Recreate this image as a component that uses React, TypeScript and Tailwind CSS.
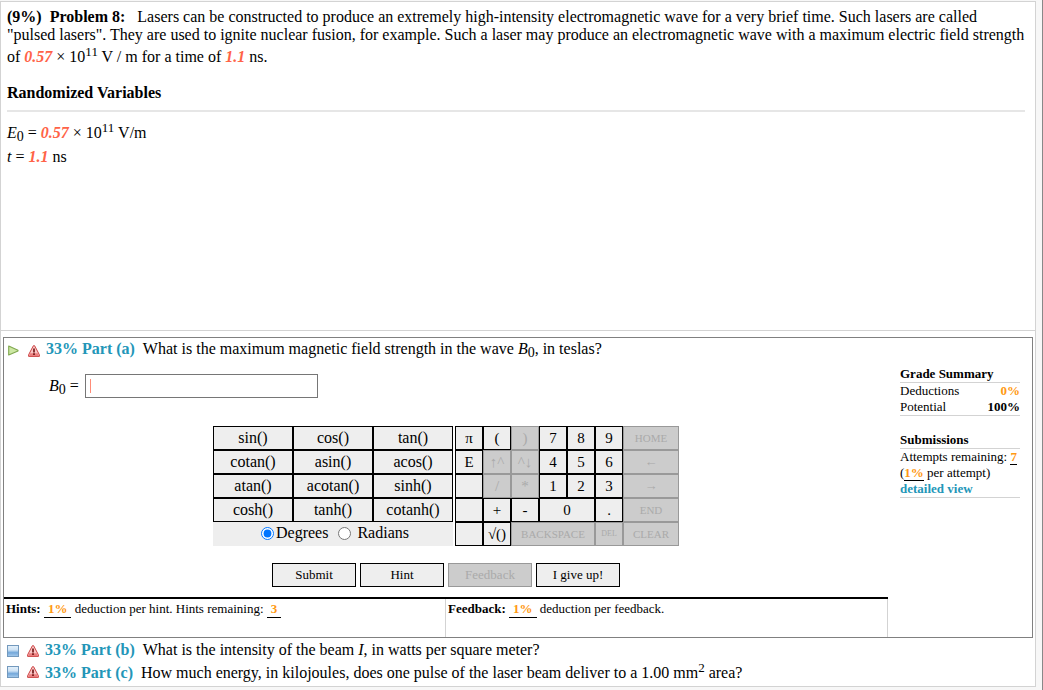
import type { ReactNode } from "react";

function Sup({ children }: { children: ReactNode }) {
  return <sup className="static! align-super! text-[13px]! leading-4!">{children}</sup>;
}

function Sub({ children }: { children: ReactNode }) {
  return <sub className="static! align-[-3px]! text-sm! leading-3!">{children}</sub>;
}

function Value({ children }: { children: ReactNode }) {
  return <b className="italic text-[#ff6347]">{children}</b>;
}

function Warning() {
  return (
    <svg viewBox="0 0 12 12" className="h-3 w-3 shrink-0" aria-hidden="true">
      <path d="M5.4 .7h1.2L11.4 9.8v1.6H.6V9.8Z" fill="#f9c4c4" stroke="#cc4444" strokeWidth="1" strokeLinejoin="round" />
      <path d="M2.2 8.2h7.6l1 1.7v1H1.2v-1Z" fill="#ea7e7e" />
      <path d="M5.2 3.6h1.6v4H5.2zM5.2 8.3h1.6V10H5.2z" fill="#6a1010" />
    </svg>
  );
}

function Play() {
  return (
    <svg viewBox="0 0 11 11" className="h-[11px] w-[11px] shrink-0" aria-hidden="true">
      <path d="M.7 1 10 5.2v.9L.7 10Z" fill="#cde8a4" stroke="#80a850" strokeWidth="1.1" strokeLinejoin="round" />
    </svg>
  );
}

function Stop() {
  return (
    <svg viewBox="0 0 12 12" className="h-3 w-3 shrink-0" aria-hidden="true">
      <defs>
        <linearGradient id="stop-fill" x1="0" y1="0" x2="0" y2="1">
          <stop offset="0" stopColor="#e4f1fb" />
          <stop offset="0.4" stopColor="#cfe3f5" />
          <stop offset="0.65" stopColor="#74a8da" />
          <stop offset="1" stopColor="#a9cdee" />
        </linearGradient>
      </defs>
      <rect x=".5" y=".5" width="11" height="11" fill="url(#stop-fill)" stroke="#7399bd" />
    </svg>
  );
}

function PartHeading({ icon, label, children }: { icon: ReactNode; label: string; children: ReactNode }) {
  return (
    <div className="flex items-center">
      <span className="flex w-5 shrink-0 items-center pt-0.5">{icon}</span>
      <span className="flex shrink-0 items-center pt-0.5 pr-1.5">
        <Warning />
      </span>
      <h2>
        <b className="mr-2 text-[#2396b8]">{label}</b>
        {children}
      </h2>
    </div>
  );
}

const functions = [
  "sin()", "cos()", "tan()",
  "cotan()", "asin()", "acos()",
  "atan()", "acotan()", "sinh()",
  "cosh()", "tanh()", "cotanh()",
];

type Key = { text: string; label?: string; span?: number; off?: boolean; size?: string };

const small = "text-[11px]";

const keys: Key[] = [
  { text: "π" }, { text: "(" }, { text: ")", off: true }, { text: "7" }, { text: "8" }, { text: "9" },
  { text: "HOME", span: 2, off: true, size: small },
  { text: "E" }, { text: "↑^", off: true }, { text: "^↓", off: true }, { text: "4" }, { text: "5" }, { text: "6" },
  { text: "←", span: 2, off: true, size: "text-[13px]" },
  { text: "", label: "Unused key" }, { text: "/", off: true }, { text: "*", off: true }, { text: "1" }, { text: "2" }, { text: "3" },
  { text: "→", span: 2, off: true, size: "text-[13px]" },
  { text: "", label: "Unused key" }, { text: "+" }, { text: "-" }, { text: "0", span: 2 }, { text: "." },
  { text: "END", span: 2, off: true, size: small },
  { text: "", label: "Unused key" }, { text: "√()" }, { text: "BACKSPACE", span: 3, off: true, size: small },
  { text: "DEL", off: true, size: "text-[8px]" }, { text: "CLEAR", span: 2, off: true, size: small },
];

const keyOn = "border-black bg-[#eee] text-black";
const keyOff = "border-[#999] bg-[#ccc] text-[#aaa]";
const spans = ["", "col-span-1", "col-span-2", "col-span-3"];

function Keypad() {
  return (
    <div className="flex justify-center gap-0.5">
      <div className="bg-[#eee]">
        <div className="grid grid-cols-[repeat(3,80px)]">
          {functions.map((name) => (
            <button key={name} type="button" className="h-6 border border-black bg-[#eee]">
              {name}
            </button>
          ))}
        </div>
        <div className="flex h-6 items-center justify-center gap-2.5 pb-0.5 pl-1">
          <label className="flex items-center gap-0.5">
            <input type="radio" name="angle" defaultChecked className="size-[13px]" />
            Degrees
          </label>
          <label className="flex items-center gap-1.5">
            <input type="radio" name="angle" className="size-[13px]" />
            Radians
          </label>
        </div>
      </div>
      <div className="grid grid-cols-[repeat(8,28px)] text-[15px]">
        {keys.map((key, i) => (
          <button
            key={i}
            type="button"
            disabled={key.off}
            aria-label={key.label}
            className={`h-6 border whitespace-nowrap ${key.off ? keyOff : keyOn} ${spans[key.span ?? 1]} ${key.size ?? ""}`}
          >
            {key.text}
          </button>
        ))}
      </div>
    </div>
  );
}

const actions = ["Submit", "Hint", "Feedback", "I give up!"];

function Amount({ children }: { children: ReactNode }) {
  return <b className="inline-block border-b border-black px-1 leading-4 text-[#ff9912]">{children}</b>;
}

function Sidebar() {
  return (
    <aside className="w-36 shrink-0 px-3 pt-1.5 text-[13px] leading-4">
      <h3 className="border-b border-[#d3d3d3] font-bold">Grade Summary</h3>
      <dl className="grid grid-cols-[1fr_auto] border-b border-[#d3d3d3]">
        <dt>Deductions</dt>
        <dd className="text-right font-bold text-[#ff9912]">0%</dd>
        <dt>Potential</dt>
        <dd className="text-right font-bold">100%</dd>
      </dl>
      <h3 className="mt-4 border-b border-[#d3d3d3] font-bold">Submissions</h3>
      <div className="border-b border-[#d3d3d3] whitespace-nowrap">
        <p>
          Attempts remaining: <b className="border-b border-black text-[#ff9912]">7</b>
        </p>
        <p>
          (<b className="border-b border-black text-[#ff9912]">1%</b> per attempt)
        </p>
        <a href="#details" className="block font-bold text-[#2396b8]">
          detailed view
        </a>
      </div>
    </aside>
  );
}

export default function App() {
  return (
    <div className="min-h-screen border-r border-[#888] bg-[#f7f7f7] pt-px pr-1.5 font-['Liberation_Serif',serif] text-base leading-[18px] text-black">
      <main className="border border-[#d3d3d3] bg-white pb-1">
        <section className="min-h-[329px] border-b border-[#d3d3d3] pt-1.5 pr-2.5 pl-1.5">
          <p>
            <b className="mr-3">(9%)&nbsp; Problem 8:</b>
            Lasers can be constructed to produce an extremely high-intensity electromagnetic wave for a very brief
            time. Such lasers are called "pulsed lasers". They are used to ignite nuclear fusion, for example. Such a
            laser may produce an electromagnetic wave with a maximum electric field strength of <Value>0.57</Value> ×
            10<Sup>11</Sup> V / m for a time of <Value>1.1</Value> ns.
          </p>
          <h2 className="mt-[18px] font-bold">Randomized Variables</h2>
          <hr className="mt-2 mb-2 border-t-2 border-[#e6e6e6]" />
          <p>
            <i>E</i>
            <Sub>0</Sub> = <Value>0.57</Value> × 10<Sup>11</Sup> V/m
          </p>
          <p className="mt-1">
            <i>t</i> = <Value>1.1</Value> ns
          </p>
        </section>

        <section className="mt-1.5 mr-0.5 ml-0.5 border border-[#808080]">
          <div className="h-[22px] pt-0.5 pl-1">
            <PartHeading icon={<Play />} label="33% Part (a)">
              What is the maximum magnetic field strength in the wave <i>B</i>
              <Sub>0</Sub>, in teslas?
            </PartHeading>
          </div>
          <div className="flex">
            <form className="min-w-0 flex-1 pt-3.5" onSubmit={(e) => e.preventDefault()}>
              <div className="flex items-center gap-1.5 pl-[45px]">
                <label htmlFor="answer">
                  <i>B</i>
                  <Sub>0</Sub> =
                </label>
                <span className="flex h-6 w-[233px] items-center border border-[#767676] bg-white px-1">
                  <span className="h-3.5 w-px bg-[#ff8c78]" />
                  <input id="answer" type="text" className="min-w-0 flex-1 outline-none" />
                </span>
              </div>
              <div className="mt-7">
                <Keypad />
              </div>
              <div className="mt-[17px] mb-2.5 flex justify-center gap-1 text-[13px]">
                {actions.map((name) => (
                  <button
                    key={name}
                    type="button"
                    disabled={name === "Feedback"}
                    className={`h-6 w-21 border ${name === "Feedback" ? keyOff : keyOn}`}
                  >
                    {name}
                  </button>
                ))}
              </div>
              <div className="grid h-10 grid-cols-2 border-t-2 border-black text-[13px] leading-4">
                <p className="border-r border-[#d3d3d3] pt-0.5 pl-0.5">
                  <b>Hints:</b> <Amount>1%</Amount> deduction per hint. Hints remaining: <Amount>3</Amount>
                </p>
                <p className="border-r border-[#d3d3d3] pt-0.5 pl-0.5">
                  <b>Feedback:</b> <Amount>1%</Amount> deduction per feedback.
                </p>
              </div>
            </form>
            <Sidebar />
          </div>
        </section>

        <section className="flex flex-col gap-px pt-[3px] pl-1.5">
          <PartHeading icon={<Stop />} label="33% Part (b)">
            What is the intensity of the beam <i>I</i>, in watts per square meter?
          </PartHeading>
          <PartHeading icon={<Stop />} label="33% Part (c)">
            How much energy, in kilojoules, does one pulse of the laser beam deliver to a 1.00 mm
            <Sup>2</Sup> area?
          </PartHeading>
        </section>
      </main>
    </div>
  );
}
